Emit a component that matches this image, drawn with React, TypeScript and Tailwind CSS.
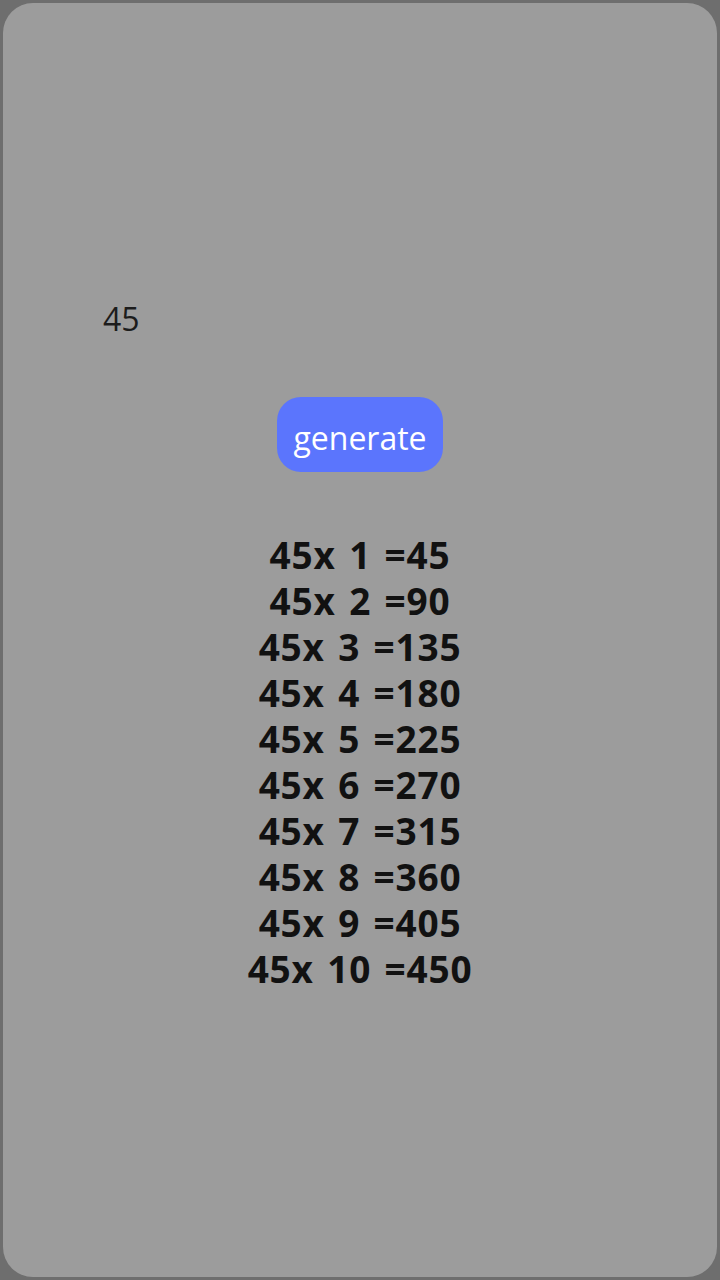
import React, { useState } from "react";

const App: React.FC = () => {
  const [num, setNum] = useState("45");
  const [rows, setRows] = useState<number[]>([1, 2, 3, 4, 5, 6, 7, 8, 9, 10]);

  const generate = () => {
    setRows([1, 2, 3, 4, 5, 6, 7, 8, 9, 10]);
  };

  const n = Number(num) || 0;

  return (
    <div
      className="min-h-[1280px] w-full bg-[#6e6e6e] p-[3px]"
      style={{ fontFamily: '"Open Sans", "Noto Sans", sans-serif' }}
    >
      <div className="flex h-[1274px] flex-col rounded-[30px] bg-[#9c9c9c] pt-[292px]">
        <div className="pl-[100px]">
          <input
            value={num}
            onChange={(e) => setNum(e.target.value)}
            className="h-[48px] w-[200px] bg-transparent px-0 text-[32px] leading-[48px] text-[#1c1c1c] outline-none"
          />
        </div>
        <div className="mt-[54px] flex justify-center">
          <button
            onClick={generate}
            className="h-[75px] w-[166px] rounded-[24px] bg-[#5b75fd] pt-[6px] text-[32px] text-white"
          >
            generate
          </button>
        </div>
        <div className="mt-[60px] flex flex-col items-center">
          {rows.map((i) => (
            <div
              key={i}
              className="text-[37px] font-bold leading-[46px] tracking-[0.8px] text-[#111] [word-spacing:3px]"
            >
              {n}x {i} ={n * i}
            </div>
          ))}
        </div>
      </div>
    </div>
  );
};

export default App;
